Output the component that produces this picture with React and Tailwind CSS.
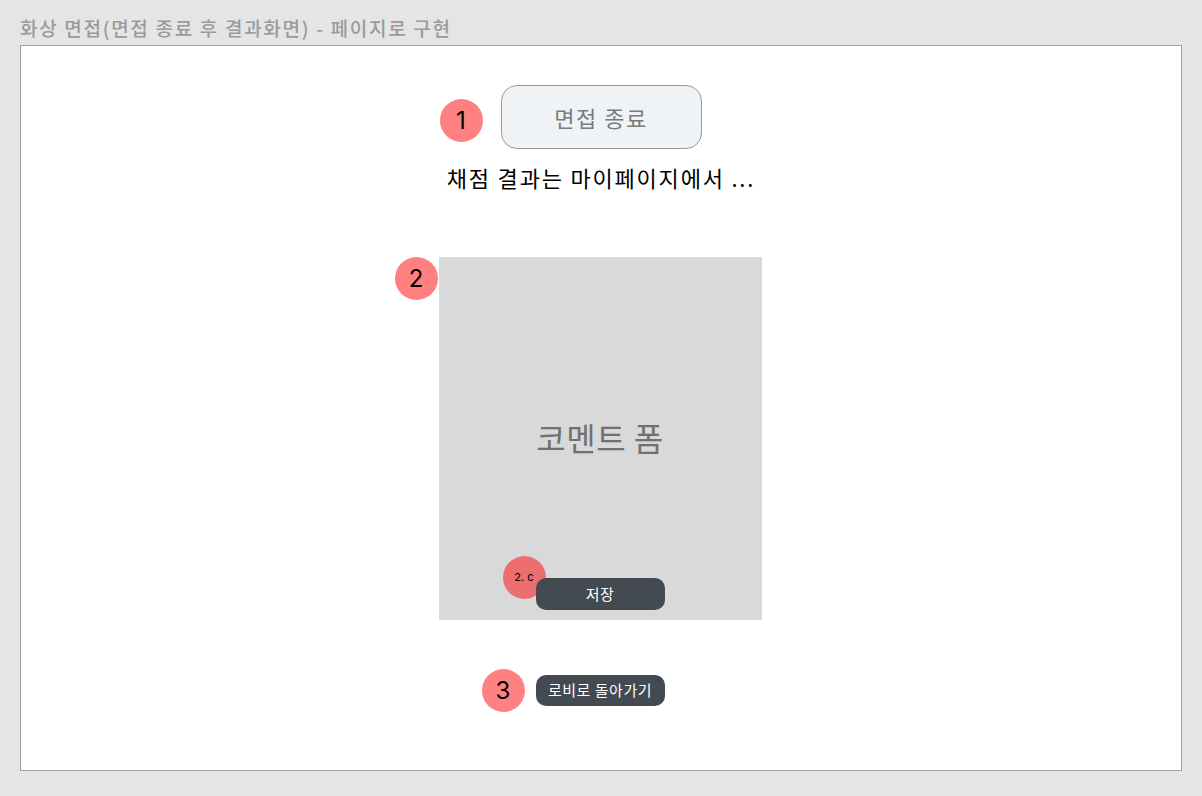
import React from 'react';

const font = { fontFamily: '"Noto Sans CJK KR", "Noto Sans", sans-serif' };

const Badge = ({ label, className = '' }) => (
  <div
    className={`absolute flex h-[43px] w-[43px] items-center justify-center rounded-full bg-[#ff8080] text-[24px] text-black ${className}`}
    style={{ fontFamily: 'Inter, sans-serif' }}
  >
    {label}
  </div>
);

export default function App() {
  return (
    <div className="min-h-screen w-full bg-[#e5e5e5] px-[20px] pt-[14px]" style={font}>
      <div className="h-[31px] text-[19px] font-medium leading-[28px] tracking-[1.7px] text-[#9a9a9a]">
        화상 면접(면접 종료 후 결과화면) - 페이지로 구현
      </div>

      <div className="flex h-[726px] w-[1162px] flex-col items-center border border-[#a0a0a0] bg-white pt-[39px]">
        {/* 1. end interview */}
        <div className="relative">
          <Badge label="1" className="left-[-61px] top-[14px]" />
          <button className="h-[64px] w-[201px] rounded-[16px] border border-[#9a9a9a] bg-[#f0f3f6] text-[22px] tracking-[1.5px] text-[#7a7a7a]">
            면접 종료
          </button>
        </div>
        <p className="mt-[13px] text-[22px] leading-[30px] tracking-[1.8px] text-black">채점 결과는 마이페이지에서 ...</p>

        {/* 2. comment form */}
        <div className="relative mr-[2px] mt-[65px] flex h-[363px] w-[323px] flex-col items-center bg-[#d9d9d9]">
          <Badge label="2" className="left-[-44px] top-[0px]" />
          <div className="flex flex-1 items-center justify-center pt-[38px] text-[32px] tracking-[0.5px] text-[#707070]">코멘트 폼</div>
          <div className="relative mb-[10px]">
            <div
              className="absolute left-[-33px] top-[-22px] flex h-[43px] w-[43px] items-center justify-center rounded-full bg-[#ec6e6e] text-[11px] text-black"
              style={{ fontFamily: 'Inter, sans-serif' }}
            >
              2. c
            </div>
            <button className="relative h-[32px] w-[129px] rounded-[10px] bg-[#434a51] text-[15px] tracking-[0.5px] text-white">저장</button>
          </div>
        </div>

        {/* 3. back to lobby */}
        <div className="relative mr-[2px] mt-[55px]">
          <Badge label="3" className="left-[-54px] top-[-6px]" />
          <button className="h-[31px] w-[129px] rounded-[10px] bg-[#434a51] text-[15px] tracking-[0.5px] text-white">로비로 돌아가기</button>
        </div>
      </div>
    </div>
  );
}
